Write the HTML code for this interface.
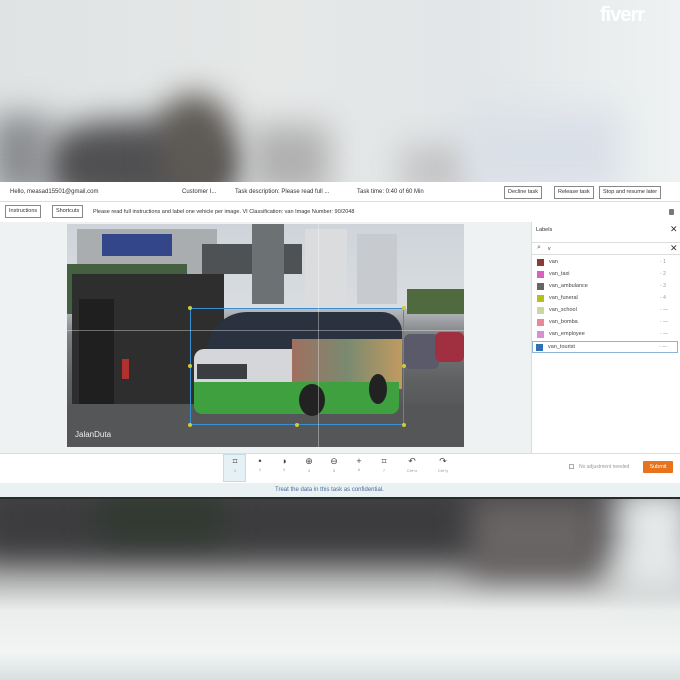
<!DOCTYPE html>
<html><head><meta charset="utf-8"><style>
*{margin:0;padding:0;box-sizing:border-box}
body{width:680px;height:680px;overflow:hidden;position:relative;font-family:"Liberation Sans",sans-serif;background:#e4e8e8}
.a{position:absolute}
.blur{filter:blur(16px)}
.t{font-size:6px;color:#333;white-space:nowrap}
.btn{position:absolute;border:1px solid #888;background:#fff;font-size:5.5px;color:#333;padding:0 3px;line-height:11px;height:13px;white-space:nowrap}
.lab{position:absolute;left:534px;width:146px;height:12px;font-size:5.5px;color:#444}
.lab i{position:absolute;left:3px;top:2px;width:7px;height:7px}
.lab span{position:absolute;left:15px;top:2px}
.lab b{position:absolute;left:126px;top:2px;font-weight:normal;color:#999;font-size:5px}
.tool{position:absolute;top:456px;width:22px;height:24px;font-size:9px;color:#444;text-align:center}
.tool small{display:block;font-size:4px;color:#999;margin-top:1px}
</style></head><body>
<div class="a" style="left:0;top:0;width:680px;height:182px;background:linear-gradient(90deg,#dfe3e3,#e6e8e8 40%,#e2e6e8 70%,#eef2f2);overflow:hidden">
 <div class="a blur" style="left:40px;top:120px;width:200px;height:90px;background:#505052;border-radius:40%"></div>
 <div class="a blur" style="left:160px;top:95px;width:70px;height:100px;background:#5e5a55;border-radius:40%"></div>
 <div class="a blur" style="left:-10px;top:115px;width:60px;height:80px;background:#8a8c90"></div>
 <div class="a blur" style="left:250px;top:125px;width:80px;height:70px;background:#b0b0b0"></div>
 <div class="a blur" style="left:400px;top:145px;width:70px;height:50px;background:#c4c4c6"></div>
 <div class="a blur" style="left:470px;top:110px;width:150px;height:80px;background:#dae0e8"></div>
 <div class="a" style="left:600px;top:4px;font-size:20px;font-weight:bold;color:#fff;letter-spacing:-1px">fiverr<span style="font-size:8px">.</span></div>
</div>
<div class="a" style="left:0;top:182px;width:680px;height:20px;background:#fff;border-bottom:1px solid #ddd"></div>
<div class="a t" style="left:10px;top:189px">Hello, measad15501@gmail.com</div>
<div class="a t" style="left:182px;top:189px">Customer I...</div>
<div class="a t" style="left:235px;top:189px">Task description: Please read full ...</div>
<div class="a t" style="left:357px;top:189px">Task time: 0:40 of 60 Min</div>
<div class="btn" style="left:504px;top:186px">Decline task</div>
<div class="btn" style="left:554px;top:186px">Release task</div>
<div class="btn" style="left:599px;top:186px">Stop and resume later</div>
<div class="a" style="left:0;top:202px;width:680px;height:20px;background:#fff"></div>
<div class="btn" style="left:5px;top:205px">Instructions</div>
<div class="btn" style="left:52px;top:205px">Shortcuts</div>
<div class="a t" style="left:93px;top:209px;font-size:5.5px">Please read full instructions and label one vehicle per image. VI Classification: van Image Number: 90/2048</div>
<div class="a" style="left:669px;top:209px;width:5px;height:6px;background:#777;border-radius:1px"></div>
<div class="a" style="left:0;top:222px;width:531px;height:231px;background:#eef2f3"></div>
<div class="a" style="left:67px;top:224px;width:397px;height:223px;overflow:hidden;background:linear-gradient(180deg,#d4d8dc 0%,#c8ccd0 35%,#7c7e80 50%,#5e6062 70%,#4a4c4e 100%)">
 <div class="a" style="left:0;top:0;width:397px;height:85px;background:linear-gradient(180deg,#cfd4da,#d9dde0)"></div>
 <div class="a" style="left:10px;top:5px;width:140px;height:80px;background:#a9adb0"></div>
 <div class="a" style="left:35px;top:10px;width:70px;height:22px;background:#33468a"></div>
 <div class="a" style="left:135px;top:20px;width:100px;height:30px;background:#4e5254"></div>
 <div class="a" style="left:185px;top:0;width:32px;height:80px;background:#6c7274"></div>
 <div class="a" style="left:238px;top:5px;width:42px;height:75px;background:#dadcde"></div>
 <div class="a" style="left:290px;top:10px;width:40px;height:70px;background:#c7cbcf"></div>
 <div class="a" style="left:340px;top:65px;width:57px;height:25px;background:#4f6a3e"></div>
 <div class="a" style="left:0;top:40px;width:120px;height:50px;background:#456040"></div>
 <div class="a" style="left:5px;top:50px;width:152px;height:130px;background:#2e2e2e"></div>
 <div class="a" style="left:12px;top:75px;width:35px;height:105px;background:#1f1f1f"></div>
 <div class="a" style="left:55px;top:135px;width:7px;height:20px;background:#b03030"></div>
 <div class="a" style="left:0;top:180px;width:397px;height:43px;background:#545658"></div>
 <div class="a" style="left:140px;top:88px;width:195px;height:50px;background:#2a3240;border-radius:40px 20px 0 0"></div>
 <div class="a" style="left:127px;top:125px;width:100px;height:35px;background:#d4d6da;border-radius:10px 0 0 0"></div>
 <div class="a" style="left:225px;top:115px;width:110px;height:50px;background:linear-gradient(90deg,#a07060,#7a8a70,#c09a60)"></div>
 <div class="a" style="left:130px;top:140px;width:50px;height:15px;background:#3a3e42"></div>
 <div class="a" style="left:127px;top:158px;width:205px;height:32px;background:#3fa040;border-radius:0 0 8px 8px"></div>
 <div class="a" style="left:232px;top:160px;width:26px;height:32px;background:#222;border-radius:50%"></div>
 <div class="a" style="left:302px;top:150px;width:18px;height:30px;background:#222;border-radius:50%"></div>
 <div class="a" style="left:337px;top:110px;width:35px;height:35px;background:#5a5a6a;border-radius:6px"></div>
 <div class="a" style="left:368px;top:108px;width:29px;height:30px;background:#a03040;border-radius:6px"></div>
 <div class="a" style="left:8px;top:206px;font-size:8px;color:#eee">JalanDuta</div>
</div>
<div class="a" style="left:190px;top:308px;width:214px;height:117px;border:1px solid #3a8fd0"></div>
<div class="a" style="left:67px;top:330px;width:397px;height:1px;background:rgba(255,255,255,.35)"></div>
<div class="a" style="left:318px;top:224px;width:1px;height:223px;background:rgba(255,255,255,.35)"></div>
<div class="a" style="left:188px;top:306px;width:4px;height:4px;background:#cc3;border-radius:50%"></div>
<div class="a" style="left:402px;top:306px;width:4px;height:4px;background:#cc3;border-radius:50%"></div>
<div class="a" style="left:188px;top:423px;width:4px;height:4px;background:#cc3;border-radius:50%"></div>
<div class="a" style="left:402px;top:423px;width:4px;height:4px;background:#cc3;border-radius:50%"></div>
<div class="a" style="left:295px;top:423px;width:4px;height:4px;background:#cc3;border-radius:50%"></div>
<div class="a" style="left:188px;top:364px;width:4px;height:4px;background:#cc3;border-radius:50%"></div>
<div class="a" style="left:402px;top:364px;width:4px;height:4px;background:#cc3;border-radius:50%"></div>
<div class="a" style="left:531px;top:222px;width:149px;height:231px;background:#fff;border-left:1px solid #ddd"></div>
<div class="a t" style="left:536px;top:227px;font-size:5.5px">Labels</div>
<div class="a" style="left:670px;top:224px;font-size:9px;color:#333">✕</div>
<div class="a" style="left:532px;top:242px;width:148px;height:13px;border-top:1px solid #ddd;border-bottom:1px solid #ddd"></div>
<div class="a" style="left:537px;top:244px;font-size:7px;color:#555">⌕</div>
<div class="a t" style="left:548px;top:246px;font-size:5px">v</div>
<div class="a" style="left:670px;top:243px;font-size:9px;color:#333">✕</div>
<div class="lab" style="top:257px"><i style="background:#8b3a3a"></i><span>van</span><b>◦ 1</b></div>
<div class="lab" style="top:269px"><i style="background:#d860c0"></i><span>van_taxi</span><b>◦ 2</b></div>
<div class="lab" style="top:281px"><i style="background:#666"></i><span>van_ambulance</span><b>◦ 3</b></div>
<div class="lab" style="top:293px"><i style="background:#b5c020"></i><span>van_funeral</span><b>◦ 4</b></div>
<div class="lab" style="top:305px"><i style="background:#c8d8a0"></i><span>van_school</span><b>◦ —</b></div>
<div class="lab" style="top:317px"><i style="background:#e88898"></i><span>van_bomba</span><b>◦ —</b></div>
<div class="lab" style="top:329px"><i style="background:#d890d0"></i><span>van_employee</span><b>◦ —</b></div>
<div class="lab" style="top:341px;border:1px solid #8cb4d8;left:532px"><i style="background:#2f6fb5"></i><span>van_tourist</span><b>◦ —</b></div>
<div class="a" style="left:0;top:453px;width:680px;height:30px;background:#fff;border-top:1px solid #ddd"></div>
<div class="a" style="left:223px;top:454px;width:23px;height:28px;background:#e6f1f6;border:1px solid #c4dce8"></div>
<div class="tool" style="left:224px">⌗<small>1</small></div>
<div class="tool" style="left:249px">•<small>2</small></div>
<div class="tool" style="left:273px">◑<small>3</small></div>
<div class="tool" style="left:298px">⊕<small>4</small></div>
<div class="tool" style="left:323px">⊖<small>5</small></div>
<div class="tool" style="left:348px">+<small>6</small></div>
<div class="tool" style="left:373px">⌗<small>7</small></div>
<div class="tool" style="left:401px">↶<small>Ctrl+z</small></div>
<div class="tool" style="left:432px">↷<small>Ctrl+y</small></div>
<div class="a" style="left:569px;top:464px;width:5px;height:5px;border:1px solid #aaa"></div>
<div class="a t" style="left:579px;top:464px;font-size:5px;color:#999">No adjustment needed</div>
<div class="a" style="left:643px;top:461px;width:30px;height:12px;background:#e8731c;border-radius:1px;color:#fff;font-size:5.5px;text-align:center;line-height:12px">Submit</div>
<div class="a" style="left:0;top:483px;width:680px;height:14px;background:#e9f1f3"></div>
<div class="a t" style="left:275px;top:487px;font-size:6px;color:#4a6a9a">Treat the data in this task as confidential.</div>
<div class="a" style="left:0;top:497px;width:680px;height:183px;background:linear-gradient(180deg,#505052 0%,#5a5a5c 22%,#a8a8a8 42%,#eceeee 62%,#f2f4f4 85%,#d8dfe0 100%);overflow:hidden">
 <div class="a blur" style="left:-20px;top:-10px;width:620px;height:70px;background:#3c3c3e"></div>
 <div class="a blur" style="left:100px;top:0;width:120px;height:40px;background:#2e3a2e"></div>
 <div class="a blur" style="left:470px;top:0;width:130px;height:80px;background:#6a6565"></div>
 <div class="a blur" style="left:615px;top:-10px;width:80px;height:110px;background:#e4e8e8"></div>
</div>
<div class="a" style="left:0;top:497px;width:680px;height:2px;background:#2a2a2a"></div>
</body></html>
